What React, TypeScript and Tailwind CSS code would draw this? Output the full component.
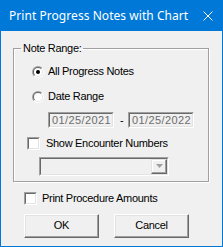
import React from "react";

function Radio({ checked }: { checked?: boolean }) {
  return (
    <span className="w-[12px] h-[12px] shrink-0 rounded-full bg-[linear-gradient(135deg,#a0a0a0_50%,#ffffff_50%)] p-[1px] flex">
      <span className="flex-1 rounded-full bg-[linear-gradient(135deg,#696969_50%,#e3e3e3_50%)] p-[1px] flex">
        <span className="flex-1 rounded-full bg-white flex items-center justify-center">
          {checked && <span className="w-[4px] h-[4px] rounded-full bg-black" />}
        </span>
      </span>
    </span>
  );
}

function Check() {
  return (
    <span className="w-[13px] h-[13px] shrink-0 border border-t-[#a0a0a0] border-l-[#a0a0a0] border-b-white border-r-white flex">
      <span className="flex-1 border border-t-[#696969] border-l-[#696969] border-b-[#e3e3e3] border-r-[#e3e3e3] bg-white" />
    </span>
  );
}

function DateBox({ value }: { value: string }) {
  return (
    <div className="w-[66px] h-[16px] border border-t-[#a0a0a0] border-l-[#a0a0a0] border-b-white border-r-white flex">
      <div className="flex-1 border border-t-[#696969] border-l-[#696969] border-b-[#e3e3e3] border-r-[#e3e3e3] bg-[#f0f0f0] text-[#6d6d6d] pl-[2px] leading-[12px] tracking-[0.4px] flex items-center">
        {value}
      </div>
    </div>
  );
}

function Button({ label }: { label: string }) {
  return (
    <div className="w-[75px] h-[24px] border border-t-white border-l-white border-b-[#696969] border-r-[#696969] shadow-[inset_-1px_-1px_0_#a0a0a0,inset_1px_1px_0_#e3e3e3] bg-[#f0f0f0] flex items-center justify-center">
      {label}
    </div>
  );
}

export default function App() {
  return (
    <div className="w-[223px] h-[247px] flex flex-col bg-[#0078d7] [font-family:'Liberation_Sans',Arial,sans-serif] text-[11px] tracking-[-0.3px] text-black select-none overflow-hidden">
      <div className="h-[31px] shrink-0 flex items-center justify-between pl-[9px] pr-[10px] text-white text-[12px] tracking-[0.05px] [font-family:'Noto_Sans',sans-serif]">
        <span>Print Progress Notes with Chart</span>
        <svg width="10" height="10" viewBox="0 0 10 10">
          <path d="M0.5 0.5 L9.5 9.5 M9.5 0.5 L0.5 9.5" stroke="white" strokeWidth="1" fill="none" />
        </svg>
      </div>
      <div className="flex-1 mx-[1px] mb-[1px] bg-[#f0f0f0] flex flex-col">
        <fieldset className="ml-[12px] mt-[11px] w-[196px] border border-[#a0a0a0] shadow-[1px_1px_0_#ffffff,inset_1px_1px_0_#ffffff] pb-[5px]">
          <legend className="ml-[7px] px-[2px] leading-[13px]">Note Range:</legend>
          <div className="mt-[10px] ml-[18px] h-[13px] flex items-center gap-[4px]">
            <Radio checked />
            <span>All Progress Notes</span>
          </div>
          <div className="mt-[12px] ml-[18px] h-[13px] flex items-center gap-[4px]">
            <Radio />
            <span>Date Range</span>
          </div>
          <div className="mt-[9px] ml-[34px] flex items-center">
            <DateBox value="01/25/2021" />
            <span className="w-[14px] pl-[6px]">-</span>
            <DateBox value="01/25/2022" />
          </div>
          <div className="mt-[8px] ml-[13px] h-[13px] flex items-center gap-[6px]">
            <Check />
            <span>Show Encounter Numbers</span>
          </div>
          <div className="mt-[7px] ml-[25px] w-[130px] h-[19px] border border-t-[#a0a0a0] border-l-[#a0a0a0] border-b-white border-r-white flex">
            <div className="flex-1 border border-t-[#696969] border-l-[#696969] border-b-[#e3e3e3] border-r-[#e3e3e3] bg-[#f0f0f0] flex justify-end">
              <div className="w-[16px] h-full border border-t-[#e3e3e3] border-l-[#e3e3e3] border-b-[#696969] border-r-[#696969] shadow-[inset_-1px_-1px_0_#a0a0a0,inset_1px_1px_0_#ffffff] flex items-center justify-center">
                <svg width="7" height="4" viewBox="0 0 7 4">
                  <path d="M0 0 H7 L3.5 4 Z" fill="#a0a0a0" />
                </svg>
              </div>
            </div>
          </div>
        </fieldset>
        <div className="mt-[10px] ml-[23px] h-[13px] flex items-center gap-[5px]">
          <Check />
          <span>Print Procedure Amounts</span>
        </div>
        <div className="mt-[9px] ml-[23px] flex gap-[15px]">
          <Button label="OK" />
          <Button label="Cancel" />
        </div>
      </div>
    </div>
  );
}
